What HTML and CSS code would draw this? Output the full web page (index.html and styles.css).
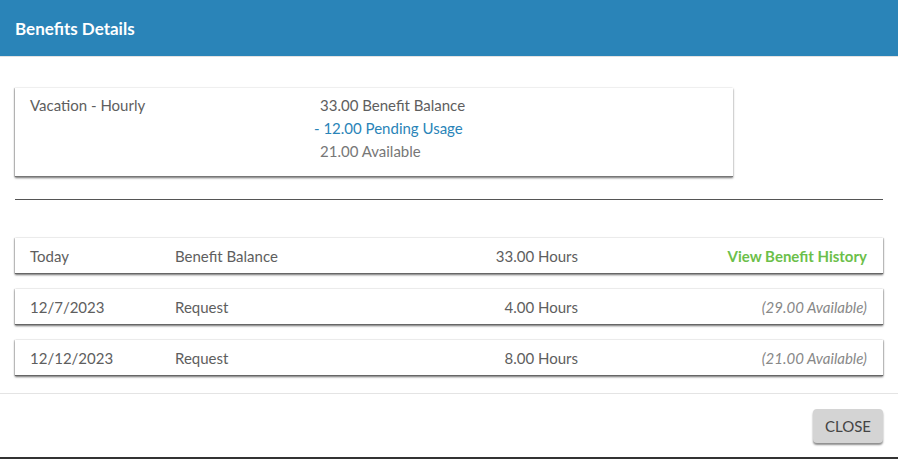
FILE: index.html
```html
<!DOCTYPE html>
<html>
<head>
<meta charset="utf-8">
<link rel="stylesheet" href="styles.css">
</head>
<body>
<div class="modal">
  <div class="header">Benefits Details</div>
  <div class="content">
    <div class="summary">
      <div class="sum-name">Vacation - Hourly</div>
      <div class="sum-vals">
        <div class="line">33.00 Benefit Balance</div>
        <div class="line pending">- 12.00 Pending Usage</div>
        <div class="line muted">21.00 Available</div>
      </div>
    </div>
    <hr class="divider">
    <div class="rows">
      <div class="row">
        <span class="c-date">Today</span>
        <span class="c-type">Benefit Balance</span>
        <span class="c-hours">33.00 Hours</span>
        <span class="c-extra link">View Benefit History</span>
      </div>
      <div class="row">
        <span class="c-date">12/7/2023</span>
        <span class="c-type">Request</span>
        <span class="c-hours">4.00 Hours</span>
        <span class="c-extra avail">(29.00 Available)</span>
      </div>
      <div class="row">
        <span class="c-date">12/12/2023</span>
        <span class="c-type">Request</span>
        <span class="c-hours">8.00 Hours</span>
        <span class="c-extra avail">(21.00 Available)</span>
      </div>
    </div>
  </div>
  <div class="footer">
    <button class="close">CLOSE</button>
  </div>
</div>
</body>
</html>
```
FILE: styles.css
```css
html, body {
  margin: 0;
  padding: 0;
  background: #fff;
}
body {
  font-family: Lato, "Open Sans", sans-serif;
  font-size: 15px;
  color: #5e5e5e;
}
.modal {
  width: 898px;
  height: 459px;
  display: flex;
  flex-direction: column;
  border-bottom: 2px solid #333;
  box-sizing: border-box;
}
.header {
  height: 56px;
  background: #2a84b8;
  color: #fff;
  font-weight: 700;
  font-size: 17px;
  display: flex;
  align-items: center;
  padding-left: 15px;
  border-bottom: 1px solid #e2e2e2;
}
.content {
  padding: 31px 15px 0 15px;
  flex: 1;
}
.summary {
  width: 718px;
  height: 89px;
  box-sizing: border-box;
  padding: 6px 15px 0 15px;
  display: flex;
  box-shadow: 0 1px 2px rgba(0,0,0,0.55), -1px 0 1px rgba(0,0,0,0.15);
  border-bottom: 1px solid #777;
}
.sum-name {
  width: 284px;
  line-height: 23px;
}
.sum-vals {
  display: flex;
  flex-direction: column;
  padding-left: 6px;
}
.line {
  line-height: 23px;
}
.line.muted {
  color: #777;
}
.pending {
  color: #2a84b8;
  margin-left: -6px;
}
.divider {
  border: 0;
  border-top: 1px solid #555;
  margin: 22px 0 0 0;
}
.rows {
  display: flex;
  flex-direction: column;
  gap: 15px;
  margin-top: 38px;
}
.row {
  height: 36px;
  box-sizing: border-box;
  display: flex;
  align-items: center;
  padding: 0 16px 0 15px;
  box-shadow: 0 1px 2px rgba(0,0,0,0.55), -1px 0 1px rgba(0,0,0,0.12), 1px 0 1px rgba(0,0,0,0.12);
  border-bottom: 1px solid #666;
}
.c-date {
  width: 145px;
}
.c-type {
  width: 200px;
}
.c-hours {
  width: 203px;
  text-align: right;
}
.c-extra {
  flex: 1;
  text-align: right;
}
.link {
  color: #6cbf4a;
  font-weight: 700;
}
.avail {
  color: #888;
  font-style: italic;
}
.footer {
  border-top: 1px solid #e4e4e4;
  height: 64px;
  display: flex;
  justify-content: flex-end;
  align-items: flex-start;
  padding: 15px 15px 0 0;
  box-sizing: border-box;
}
.close {
  width: 70px;
  height: 34px;
  background: #d4d4d4;
  border: 0;
  border-radius: 4px;
  font-family: Lato, "Open Sans", sans-serif;
  font-size: 15px;
  color: #444;
  box-shadow: 0 2px 2px rgba(0,0,0,0.45);
  cursor: pointer;
}
```
